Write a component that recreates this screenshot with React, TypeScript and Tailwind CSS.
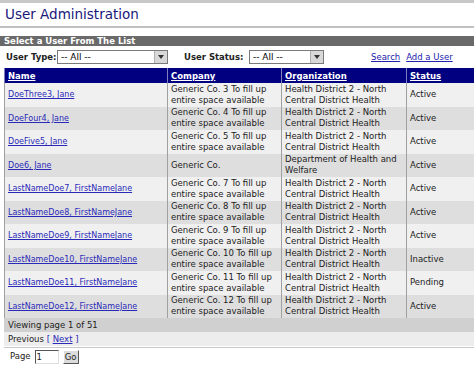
const rows = [
  { name: 'DoeThree3, Jane', company: 'Generic Co. 3 To fill up entire space available', org: 'Health District 2 - North Central District Health', status: 'Active' },
  { name: 'DoeFour4, Jane', company: 'Generic Co. 4 To fill up entire space available', org: 'Health District 2 - North Central District Health', status: 'Active' },
  { name: 'DoeFive5, Jane', company: 'Generic Co. 5 To fill up entire space available', org: 'Health District 2 - North Central District Health', status: 'Active' },
  { name: 'Doe6, Jane', company: 'Generic Co.', org: 'Department of Health and Welfare', status: 'Active' },
  { name: 'LastNameDoe7, FirstNameJane', company: 'Generic Co. 7 To fill up entire space available', org: 'Health District 2 - North Central District Health', status: 'Active' },
  { name: 'LastNameDoe8, FirstNameJane', company: 'Generic Co. 8 To fill up entire space available', org: 'Health District 2 - North Central District Health', status: 'Active' },
  { name: 'LastNameDoe9, FirstNameJane', company: 'Generic Co. 9 To fill up entire space available', org: 'Health District 2 - North Central District Health', status: 'Active' },
  { name: 'LastNameDoe10, FirstNameJane', company: 'Generic Co. 10 To fill up entire space available', org: 'Health District 2 - North Central District Health', status: 'Inactive' },
  { name: 'LastNameDoe11, FirstNameJane', company: 'Generic Co. 11 To fill up entire space available', org: 'Health District 2 - North Central District Health', status: 'Pending' },
  { name: 'LastNameDoe12, FirstNameJane', company: 'Generic Co. 12 To fill up entire space available', org: 'Health District 2 - North Central District Health', status: 'Active' },
];

function FakeSelect({ width }: { width: string }) {
  return (
    <div className={`flex h-[14px] items-stretch border border-[#7a7a7a] bg-white ${width}`}>
      <span className="flex-1 pl-[3px] text-[9px] leading-[12px] text-black">-- All --</span>
      <span className="flex w-[13px] items-center justify-center border-l border-[#b0b0b0] bg-[#d8d8d8]">
        <svg width="6" height="4" viewBox="0 0 6 4"><path d="M0 0h6L3 4z" fill="#333" /></svg>
      </span>
    </div>
  );
}

export default function App() {
  return (
    <div className="h-[365px] w-[474px] overflow-hidden bg-white font-['DejaVu_Sans',Verdana,sans-serif] text-[8.5px] text-[#222]">
      <div className="h-[3px] bg-[#c8c8c8]" />
      <h1 className="pl-[5px] pt-[2px] text-[13.5px] leading-[18px] text-[#18187a]">User Administration</h1>
      <div className="mt-[3px] h-[2px] bg-[#c0c0c0]" />
      <div className="mt-[8px] h-[10px] bg-[#6a6a6a] pl-[4px] text-[8.5px] font-bold leading-[10px] text-white">
        Select a User From The List
      </div>
      <div className="flex h-[22px] items-center">
        <span className="ml-[6px] w-[51px] font-bold">User Type:</span>
        <FakeSelect width="w-[111px]" />
        <span className="ml-[16px] w-[65px] font-bold">User Status:</span>
        <FakeSelect width="w-[75px]" />
        <a className="ml-[47px] text-[#2222aa] underline">Search</a>
        <a className="ml-[6px] text-[#2222aa] underline">Add a User</a>
      </div>
      <table className="ml-[4px] w-[470px] table-fixed border-collapse">
        <colgroup>
          <col className="w-[163px]" />
          <col className="w-[114px]" />
          <col className="w-[125px]" />
          <col className="w-[68px]" />
        </colgroup>
        <thead>
          <tr className="h-[15px] bg-[#000080]">
            {['Name', 'Company', 'Organization', 'Status'].map((h) => (
              <th key={h} className="border-x border-[#8080c0] px-[3px] py-0 text-left text-[8.5px] font-bold leading-[12px] text-white">
                <a className="underline">{h}</a>
              </th>
            ))}
          </tr>
        </thead>
        <tbody>
          {rows.map((r, i) => (
            <tr key={r.name} className={`h-[23.5px] ${i % 2 === 0 ? 'bg-[#f0f0f0]' : 'bg-[#dedede]'}`}>
              <td className="border-x border-[#a0a0a0] px-[3px] align-middle text-[8px] leading-[11px]">
                <a className="text-[#2a2ab8] underline">{r.name}</a>
              </td>
              <td className="border-x border-[#a0a0a0] px-[3px] align-middle leading-[11px]">{r.company}</td>
              <td className="border-x border-[#a0a0a0] px-[3px] align-middle leading-[11px]">{r.org}</td>
              <td className="border-x border-[#a0a0a0] px-[3px] align-middle leading-[11px]">{r.status}</td>
            </tr>
          ))}
        </tbody>
      </table>
      <div className="ml-[4px] h-[14px] w-[470px] bg-[#d0d0d0] pl-[4px] leading-[14px]">Viewing page 1 of 51</div>
      <div className="ml-[4px] h-[14px] w-[470px] bg-[#ededed] pl-[4px] leading-[14px]">
        Previous <a className="text-[#2a2ab8]">[ <span className="underline">Next</span> ]</a>
      </div>
      <div className="ml-[4px] mt-[1px] h-[1px] w-[470px] bg-[#c8c8c8]" />
      <div className="flex h-[17px] items-center pl-[10px]">
        <span>Page</span>
        <div className="ml-[4px] h-[14px] w-[24px] border border-t-[#555] border-l-[#555] border-r-[#ddd] border-b-[#ddd] bg-white pl-[1px] leading-[12px]">1</div>
        <div className="ml-[4px] h-[14px] w-[16px] border border-t-[#fff] border-l-[#fff] border-r-[#555] border-b-[#555] bg-[#dcdcdc] text-center leading-[12px]">Go</div>
      </div>
    </div>
  );
}
